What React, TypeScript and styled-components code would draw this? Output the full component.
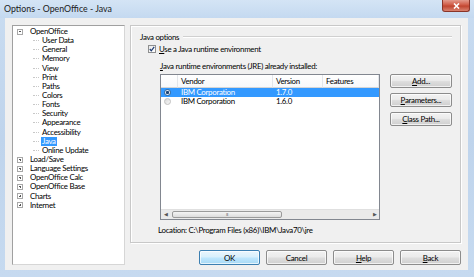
import React from "react";
import styled, { createGlobalStyle } from "styled-components";

const GlobalStyle = createGlobalStyle`
  html, body { margin: 0; padding: 0; }
  body { font-family: Lato, "Open Sans", sans-serif; font-size: 7.9px; letter-spacing: -0.3px; color: #000; }
`;

const Window = styled.div`
  width: 474px;
  height: 277px;
  box-sizing: border-box;
  background: linear-gradient(180deg, #c9dcf1 0%, #bfd4ec 50%, #c6daf0 100%);
  display: flex;
  flex-direction: column;
  padding: 0 6px 7px 5px;
  overflow: hidden;
`;

const TitleBar = styled.div`
  height: 18px;
  display: flex;
  align-items: flex-start;
  justify-content: space-between;
  background: linear-gradient(180deg, #d4e4f5 0%, #c4d9f0 100%);
  margin: 0 -6px 0 -5px;
  padding: 0 5px 0 4px;
`;

const Title = styled.div`
  font-size: 8.8px;
  letter-spacing: 0;
  line-height: 17px;
  color: #1a1a1a;
`;

const CloseBtn = styled.div`
  width: 28px;
  height: 12px;
  margin-right: -1px;
  border: 1px solid #8a3428;
  border-top: none;
  border-radius: 0 0 3px 3px;
  background: linear-gradient(180deg, #e39a8c 0%, #cf5a45 45%, #c04530 55%, #d9826f 100%);
  display: flex;
  align-items: center;
  justify-content: center;
  box-sizing: border-box;
`;

const Body = styled.div`
  flex: 1;
  background: #f0f0f0;
  display: flex;
  gap: 5px;
  padding: 7px 7px 5px 7px;
  box-sizing: border-box;
`;

const TreePanel = styled.div`
  width: 113px;
  background: #fff;
  border: 1px solid #a0a0a0;
  border-right-color: #d6d6d6;
  border-bottom-color: #d6d6d6;
  box-sizing: border-box;
  padding-top: 1px;
`;

const TreeRow = styled.div<{ $level: number }>`
  height: 9.15px;
  display: flex;
  align-items: center;
  padding-left: ${(p) => (p.$level === 0 ? 4 : 28)}px;
  line-height: 9px;
  white-space: nowrap;
`;

const Expander = styled.div`
  width: 4px;
  height: 4px;
  border: 1px solid #a8a8a8;
  background: #fff;
  margin-right: 6px;
  position: relative;
  flex: none;
  &::before {
    content: "";
    position: absolute;
    left: 1px;
    right: 1px;
    top: 1.5px;
    height: 1px;
    background: #555;
  }
`;

const PlusBar = styled.div`
  position: absolute;
  top: 1px;
  bottom: 1px;
  left: 1.5px;
  width: 1px;
  background: #555;
`;

const Connector = styled.div`
  width: 6px;
  border-top: 1px dotted #c8c8c8;
  margin-left: -8px;
  margin-right: 2px;
`;

const TreeLabel = styled.span<{ $selected?: boolean }>`
  padding: 0 1px;
  line-height: 9px;
  background: ${(p) => (p.$selected ? "#3399ff" : "transparent")};
  color: ${(p) => (p.$selected ? "#fff" : "#000")};
`;

const RightCol = styled.div`
  flex: 1;
  display: flex;
  flex-direction: column;
`;

const Frame = styled.div`
  height: 218px;
  border: 1px solid #c8c8c8;
  box-shadow: inset 1px 1px 0 #fff, 1px 1px 0 #fff;
  box-sizing: border-box;
  padding: 6px 5px 0 9px;
  display: flex;
  flex-direction: column;
`;

const GroupHeader = styled.div`
  display: flex;
  align-items: center;
  height: 9px;
  gap: 4px;
`;

const GroupLine = styled.div`
  flex: 1;
  height: 1px;
  background: #d0d0d0;
  border-bottom: 1px solid #fff;
  margin-right: 3px;
`;

const CheckRow = styled.div`
  display: flex;
  align-items: center;
  gap: 3px;
  margin: 3px 0 0 8px;
  height: 10px;
`;

const CheckBox = styled.div`
  width: 8px;
  height: 8px;
  border: 1px solid #8e8f8f;
  background: linear-gradient(135deg, #eaeaea, #fff);
  box-sizing: border-box;
  display: flex;
  align-items: center;
  justify-content: center;
`;

const JreSection = styled.div`
  margin: 8px 0 0 20px;
  display: flex;
  flex-direction: column;
`;

const JreLabel = styled.div`
  height: 9px;
  line-height: 9px;
`;

const JreRow = styled.div`
  display: flex;
  gap: 10px;
  margin-top: 3px;
`;

const Table = styled.div`
  width: 220px;
  height: 146px;
  border: 1px solid #828790;
  background: #fff;
  box-sizing: border-box;
  display: flex;
  flex-direction: column;
`;

const Grid = styled.div`
  display: grid;
  grid-template-columns: 17px 95px 50px 1fr;
`;

const HeadCell = styled.div`
  height: 12px;
  line-height: 12px;
  padding-left: 3px;
  border-right: 1px solid #e3e6ea;
  border-bottom: 1px solid #d5d5d5;
  background: linear-gradient(180deg, #fff 0%, #f7f8fa 100%);
`;

const DataRow = styled.div<{ $selected?: boolean }>`
  display: contents;
  & > div {
    background: ${(p) => (p.$selected ? "#3399ff" : "#fff")};
    color: ${(p) => (p.$selected ? "#fff" : "#000")};
  }
`;

const Cell = styled.div`
  height: 9px;
  line-height: 9px;
  padding-left: 3px;
  white-space: nowrap;
  display: flex;
  align-items: center;
`;

const Radio = styled.div<{ $on?: boolean }>`
  width: 5px;
  height: 5px;
  border-radius: 50%;
  border: 1px solid ${(p) => (p.$on ? "#3a6a98" : "#c0c0c0")};
  background: ${(p) =>
    p.$on
      ? "radial-gradient(circle, #1d4677 0 1.3px, #dfe9f5 1.8px)"
      : "linear-gradient(135deg, #d8d8d8, #f8f8f8)"};
  box-sizing: content-box;
`;

const TableFill = styled.div`
  flex: 1;
`;

const HScroll = styled.div`
  height: 9px;
  display: flex;
  align-items: center;
  background: #eaeaea;
  border-top: 1px solid #e0e0e0;
  padding: 0 2px;
  gap: 4px;
`;

const Arrow = styled.div`
  width: 5px;
  font-size: 5px;
  color: #555;
  line-height: 9px;
  text-align: center;
`;

const Thumb = styled.div`
  width: 110px;
  height: 7px;
  border: 1px solid #9a9a9a;
  border-radius: 2px;
  background: linear-gradient(180deg, #f4f4f4, #dcdcdc);
  box-sizing: border-box;
  display: flex;
  align-items: center;
  justify-content: center;
  font-size: 4px;
  color: #777;
  letter-spacing: -0.5px;
`;

const SideButtons = styled.div`
  display: flex;
  flex-direction: column;
  gap: 5px;
`;

const Button = styled.div<{ $default?: boolean; $w?: number }>`
  width: ${(p) => p.$w ?? 62}px;
  height: ${(p) => (p.$default !== undefined ? 15 : 14)}px;
  box-sizing: border-box;
  border: 1px solid ${(p) => (p.$default ? "#3c7fb1" : "#8c8c8c")};
  border-radius: 2px;
  background: ${(p) =>
    p.$default
      ? "linear-gradient(180deg, #eaf6fd 0%, #d9f0fc 45%, #bee6fd 55%, #a7d9f5 100%)"
      : "linear-gradient(180deg, #f2f2f2 0%, #ebebeb 45%, #dddddd 55%, #cfcfcf 100%)"};
  box-shadow: inset 0 0 0 1px rgba(255, 255, 255, 0.7);
  display: flex;
  align-items: center;
  justify-content: center;
  line-height: 12px;
`;

const U = styled.span`
  text-decoration: underline;
  text-underline-offset: 1px;
`;

const Location = styled.div`
  margin-top: 6px;
  margin-left: 18px;
  height: 9px;
  line-height: 9px;
`;

const ButtonRow = styled.div`
  display: flex;
  justify-content: flex-end;
  gap: 6px;
  margin-top: 7px;
`;

const children = [
  "User Data",
  "General",
  "Memory",
  "View",
  "Print",
  "Paths",
  "Colors",
  "Fonts",
  "Security",
  "Appearance",
  "Accessibility",
  "Java",
  "Online Update",
];

const topLevel = [
  "Load/Save",
  "Language Settings",
  "OpenOffice Calc",
  "OpenOffice Base",
  "Charts",
  "Internet",
];

export default function App() {
  return (
    <>
      <GlobalStyle />
      <Window>
        <TitleBar>
          <Title>Options - OpenOffice - Java</Title>
          <CloseBtn>
            <svg width="7" height="6" viewBox="0 0 7 6">
              <path d="M1 0.5 L6 5.5 M6 0.5 L1 5.5" stroke="#fff" strokeWidth="1.6" />
            </svg>
          </CloseBtn>
        </TitleBar>
        <Body>
          <TreePanel>
            <TreeRow $level={0}>
              <Expander />
              <TreeLabel>OpenOffice</TreeLabel>
            </TreeRow>
            {children.map((c) => (
              <TreeRow $level={1} key={c}>
                <Connector />
                <TreeLabel $selected={c === "Java"}>{c}</TreeLabel>
              </TreeRow>
            ))}
            {topLevel.map((t) => (
              <TreeRow $level={0} key={t}>
                <Expander>
                  <PlusBar />
                </Expander>
                <TreeLabel>{t}</TreeLabel>
              </TreeRow>
            ))}
          </TreePanel>
          <RightCol>
            <Frame>
              <GroupHeader>
                <span>Java options</span>
                <GroupLine />
              </GroupHeader>
              <CheckRow>
                <CheckBox>
                  <svg width="6" height="6" viewBox="0 0 6 6">
                    <path d="M0.8 3 L2.3 4.8 L5.2 0.8" stroke="#1c3a70" strokeWidth="1.2" fill="none" />
                  </svg>
                </CheckBox>
                <span>
                  <U>U</U>se a Java runtime environment
                </span>
              </CheckRow>
              <JreSection>
                <JreLabel>
                  <U>J</U>ava runtime environments (JRE) already installed:
                </JreLabel>
                <JreRow>
                  <Table>
                    <Grid>
                      <HeadCell />
                      <HeadCell>Vendor</HeadCell>
                      <HeadCell>Version</HeadCell>
                      <HeadCell>Features</HeadCell>
                      <DataRow $selected>
                        <Cell>
                          <Radio $on />
                        </Cell>
                        <Cell>IBM Corporation</Cell>
                        <Cell>1.7.0</Cell>
                        <Cell />
                      </DataRow>
                      <DataRow>
                        <Cell>
                          <Radio />
                        </Cell>
                        <Cell>IBM Corporation</Cell>
                        <Cell>1.6.0</Cell>
                        <Cell />
                      </DataRow>
                    </Grid>
                    <TableFill />
                    <HScroll>
                      <Arrow>◀</Arrow>
                      <Thumb>III</Thumb>
                      <TableFill />
                      <Arrow>▶</Arrow>
                    </HScroll>
                  </Table>
                  <SideButtons>
                    <Button>
                      <span>
                        <U>A</U>dd...
                      </span>
                    </Button>
                    <Button>
                      <span>
                        <U>P</U>arameters...
                      </span>
                    </Button>
                    <Button>
                      <span>
                        <U>C</U>lass Path...
                      </span>
                    </Button>
                  </SideButtons>
                </JreRow>
              </JreSection>
              <Location>Location: C:\Program Files (x86)\IBM\Java70\jre</Location>
            </Frame>
            <ButtonRow>
              <Button $default $w={61}>OK</Button>
              <Button $default={false} $w={61}>Cancel</Button>
              <Button $default={false} $w={61}>
                <span>
                  <U>H</U>elp
                </span>
              </Button>
              <Button $default={false} $w={61}>
                <span>
                  <U>B</U>ack
                </span>
              </Button>
            </ButtonRow>
          </RightCol>
        </Body>
      </Window>
    </>
  );
}
